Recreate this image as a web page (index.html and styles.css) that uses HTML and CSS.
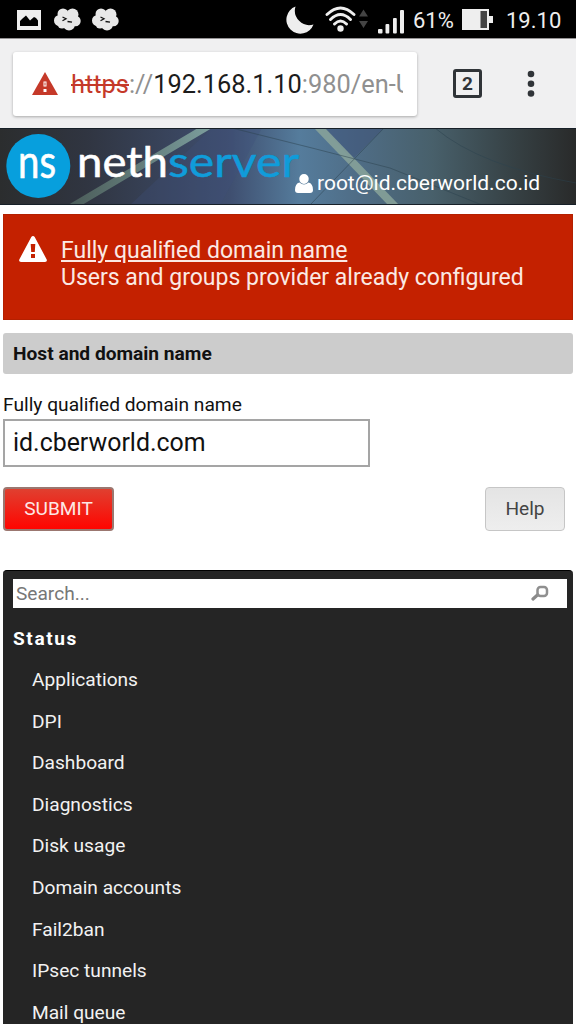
FILE: index.html
```html
<!DOCTYPE html>
<html lang="en">
<head>
  <meta charset="UTF-8">
  <title>Host and domain name</title>
  <link rel="stylesheet" href="styles.css">
</head>
<body>

  <div class="statusbar">
    <svg class="icon-picture" width="24" height="20" viewBox="0 0 24 20">
      <path fill="#eee" fill-rule="evenodd" d="M0 0h24v20H0zM3 16h18V10.500l-2-2.500-2-1-4 3.500-4-5-3.500 3-2.500 2.500z"/>
    </svg>
    <svg class="icon-cloud" width="27" height="23" viewBox="0 0 27 23">
      <g fill="#e8e8e8"><circle cx="9" cy="6" r="5.500"/><circle cx="18.500" cy="6.500" r="6"/><circle cx="5.500" cy="12.500" r="5.500"/><circle cx="21.500" cy="13" r="5.200"/><circle cx="8" cy="16" r="4.500"/><circle cx="15" cy="16.500" r="6"/><circle cx="13" cy="11" r="6"/></g>
      <path d="M8.500 9l3.500 1.700-3.500 2M13.500 13.500l4.500.7" fill="none" stroke="#111" stroke-width="1.300"/>
    </svg>
    <svg class="icon-cloud" width="27" height="23" viewBox="0 0 27 23">
      <g fill="#e8e8e8"><circle cx="9" cy="6" r="5.500"/><circle cx="18.500" cy="6.500" r="6"/><circle cx="5.500" cy="12.500" r="5.500"/><circle cx="21.500" cy="13" r="5.200"/><circle cx="8" cy="16" r="4.500"/><circle cx="15" cy="16.500" r="6"/><circle cx="13" cy="11" r="6"/></g>
      <path d="M8.500 9l3.500 1.700-3.500 2M13.500 13.500l4.500.7" fill="none" stroke="#111" stroke-width="1.300"/>
    </svg>
    <svg class="icon-moon" width="28" height="28" viewBox="0 0 28 28">
      <path fill="#eee" d="M9.500 0.500A14 14 0 1 0 27.500 18.500A14.500 14.500 0 0 1 9.500 0.500z"/>
    </svg>
    <svg class="icon-wifi" width="45" height="27" viewBox="0 0 45 27">
      <g fill="none" stroke="#eee" stroke-width="2.900" stroke-linecap="round">
        <path d="M2 8.500Q15.500-4.500 29 8.500M5.500 13.500Q15.500 3.500 25.500 13.500M9.500 18Q15.500 12 21.500 18"/>
      </g>
      <circle cx="15.500" cy="22.500" r="3.200" fill="#eee"/>
      <path fill="#444" d="M34 10.500l4.500-7 4.500 7zM34 15h9l-4.500 7z"/>
    </svg>
    <svg class="icon-signal" width="27" height="24" viewBox="0 0 27 24">
      <g fill="#eee"><rect x="0" y="19" width="4.500" height="4.500" rx="1"/><rect x="7.500" y="14" width="3.800" height="9.500" rx="1"/><rect x="15" y="8" width="3.800" height="15.500" rx="1"/><rect x="22" y="0" width="4" height="23.500" rx="1"/></g>
    </svg>
    <span class="battery-text">61%</span>
    <svg class="icon-battery" width="31" height="21" viewBox="0 0 31 21">
      <path fill="#eee" d="M0 0h27v7h4v7h-4v7H0z"/>
      <rect x="18.500" y="2" width="6.500" height="17" fill="#444"/>
    </svg>
    <span class="clock">19.10</span>
  </div>

  <div class="toolbar">
    <div class="address">
      <svg width="26" height="23" viewBox="0 0 26 23">
        <path fill="#c53929" d="M13 0l13 23H0z"/>
        <path fill="#fff" d="M11.500 9.500h3v5h-3zM11.500 17h3v3h-3z"/>
        <path fill="#c53929" d="M12.500 10.500h1v3h-1z"/>
      </svg>
      <div class="url"><span class="scheme">https</span>://<span class="host">192.168.1.10</span>:980/en-US</div>
    </div>
    <div class="tabs">2</div>
    <svg class="dots" width="8" height="28" viewBox="0 0 8 28">
      <g fill="#303438"><circle cx="4" cy="4" r="3.300"/><circle cx="4" cy="13.800" r="3.300"/><circle cx="4" cy="23.500" r="3.300"/></g>
    </svg>
  </div>

  <div class="header">
    <svg class="banner" width="576" height="77" viewBox="0 0 576 77">
      <defs>
        <linearGradient id="sky" x1="0" x2="1" y1="0" y2="0">
          <stop offset="0" stop-color="#2b2d2e"/>
          <stop offset=".15" stop-color="#303541"/>
          <stop offset=".4" stop-color="#3f4f70"/>
          <stop offset=".52" stop-color="#557c9c"/>
          <stop offset=".62" stop-color="#4f6d86"/>
          <stop offset=".75" stop-color="#48606b"/>
          <stop offset=".9" stop-color="#353f42"/>
          <stop offset="1" stop-color="#292a2a"/>
        </linearGradient>
        <linearGradient id="beam" x1="0" x2="1" y1="0" y2="0">
          <stop offset="0" stop-color="#4a5b58"/>
          <stop offset="1" stop-color="#7c9e9d"/>
        </linearGradient>
      </defs>
      <rect width="576" height="77" fill="url(#sky)"/>
      <path fill="#3e4f7c" opacity=".3" d="M212 0h50L220 77H130z"/>
      <path fill="#3c4f78" opacity=".5" d="M324 0h60L352 32z"/>
      <path fill="url(#beam)" d="M198 0h14L82 77H68z"/>
      <path fill="#8aa59a" opacity=".85" d="M314 0h11L399 77H388z"/>
      <path fill="none" stroke="#2c414e" opacity=".5" d="M232 0l80 20 78 20 92 37M384 0L310 77M435 0q45 38 141 55"/>
      <path fill="none" stroke="#172028" d="M0 .5h576M0 76.500h576"/>
      <circle cx="38.300" cy="38" r="32" fill="#079fdd"/>
      <text class="mark" x="18" y="50" textLength="38" lengthAdjust="spacingAndGlyphs">ns</text>
      <text class="wordmark" x="77" y="49" textLength="91" lengthAdjust="spacingAndGlyphs">neth</text>
      <text class="wordmark blue" x="168" y="49" textLength="131" lengthAdjust="spacingAndGlyphs">server</text>
    </svg>
    <div class="user">
      <svg width="18" height="19" viewBox="0 0 18 19">
        <path fill="#fff" d="M9 0a4.700 4.700 0 0 1 4.700 5A4.700 5 0 1 1 4.300 5 4.700 4.700 0 0 1 9 0zM4.500 8.500q4.500 4 9 0Q18 9.500 18 16q0 3-3 3H3q-3 0-3-3 0-6.500 4.500-7.500z"/>
      </svg>
      <span>root@id.cberworld.co.id</span>
    </div>
  </div>

  <div class="alert">
    <svg width="28" height="26" viewBox="0 0 28 26">
      <path fill="#fff" fill-rule="evenodd" d="M14 0q1 0 1.700 1L27.700 23.500Q28.500 26 26 26H2Q-.500 26 .3 23.500L12.300 1Q13 0 14 0zM11.700 8l.5 8h3.600l.5-8zM12 18v4h4v-4z"/>
    </svg>
    <div class="alert-text">
      <a href="#">Fully qualified domain name</a><br>
      Users and groups provider already configured
    </div>
  </div>

  <h2>Host and domain name</h2>

  <form>
    <label for="fqdn">Fully qualified domain name</label>
    <input type="text" id="fqdn" value="id.cberworld.com">
    <div class="buttons">
      <button class="submit" type="submit">SUBMIT</button>
      <button class="help" type="button">Help</button>
    </div>
  </form>

  <div class="menu">
    <div class="search">
      <input type="text" placeholder="Search...">
      <svg width="18" height="17" viewBox="0 0 18 17">
        <path d="M7 9.500L2 14" stroke="#8a8a8a" stroke-width="3.200" stroke-linecap="round"/>
        <rect x="6.500" y="2" width="9.500" height="9" rx="3" fill="#fff" stroke="#8f8f8f" stroke-width="2.500"/>
      </svg>
    </div>
    <h3>Status</h3>
    <ul>
      <li>Applications</li>
      <li>DPI</li>
      <li>Dashboard</li>
      <li>Diagnostics</li>
      <li>Disk usage</li>
      <li>Domain accounts</li>
      <li>Fail2ban</li>
      <li>IPsec tunnels</li>
      <li>Mail queue</li>
    </ul>
  </div>

</body>
</html>
```
FILE: styles.css
```css
* { box-sizing: border-box; }
html {
  height: 1024px;
  overflow: hidden;
}
body {
  margin: 0;
  height: 1024px;
  overflow: hidden;
  background-color: #fff;
  font-family: Roboto, "Liberation Sans", sans-serif;
  color: #111;
}
svg {
  display: block;
  flex: none;
}

/* phone status bar */
.statusbar {
  display: flex;
  align-items: center;
  height: 38px;
  padding: 1px 13px 0 17px;
  background-color: #000;
  color: #eee;
  font-size: 22px;
  white-space: nowrap;
}
.icon-cloud { margin-left: 13px; }
.icon-cloud + .icon-cloud { margin-left: 11px; }
.icon-moon { margin-left: 167px; }
.icon-wifi { margin-left: 11px; }
.icon-signal {
  margin-left: 8px;
  margin-top: 4px;
}
.battery-text {
  width: 48px;
  margin-left: 8px;
  margin-top: 2px;
}
.icon-battery { margin-left: 1px; }
.clock {
  margin-left: 13px;
  margin-top: 2px;
}

/* browser toolbar */
.toolbar {
  display: flex;
  align-items: center;
  height: 90px;
  padding-left: 13px;
  border-top: 1px solid #949294;
  background-color: #f0f0f1;
}
.address {
  display: flex;
  align-items: center;
  width: 404px;
  height: 64px;
  padding: 0 14px 0 19px;
  border-radius: 3px;
  background-color: #fff;
  box-shadow: 0 1px 3px rgba(0,0,0,0.3);
}
.url {
  flex: 1;
  margin-left: 13px;
  overflow: hidden;
  white-space: nowrap;
  font-size: 25.4px;
  color: #909090;
}
.scheme {
  color: #c53929;
  text-decoration: line-through;
}
.host { color: #1c1c1c; }
.tabs {
  width: 29px;
  height: 29px;
  margin-left: 36px;
  border: 3px solid #303438;
  border-radius: 3px;
  line-height: 24px;
  text-align: center;
  font-size: 19px;
  font-weight: bold;
  color: #303438;
}
.dots { margin-left: 45px; }

/* page header */
.header {
  display: grid;
  height: 77px;
}
.banner, .user { grid-area: 1 / 1; }
.mark {
  font-family: Lato, sans-serif;
  font-size: 47px;
  fill: #fff;
  stroke: #fff;
  stroke-width: 0.6px;
}
.wordmark {
  font-family: Lato, sans-serif;
  font-size: 43px;
  fill: #fff;
  stroke: #fff;
  stroke-width: 0.5px;
}
.blue {
  fill: #109cda;
  stroke: #109cda;
}
.user {
  display: flex;
  align-items: center;
  align-self: end;
  height: 28px;
  margin: 0 0 8px 295px;
  font-size: 21px;
  color: #fff;
}
.user span { margin-left: 4px; }

.alert {
  display: flex;
  height: 106px;
  margin: 9px 3px 13px;
  padding: 21px 15px;
  border: 1px solid #b42000;
  background-color: #c42100;
  color: #fbe9e4;
}
.alert a {
  color: inherit;
  text-underline-offset: 2px;
}
.alert-text {
  margin-left: 14px;
  padding-top: 1px;
  font-size: 23px;
  line-height: 27px;
  white-space: nowrap;
}

h2 {
  height: 41px;
  margin: 0 3px;
  padding-left: 10px;
  border-radius: 3px;
  background-color: #ccc;
  line-height: 41px;
  font-size: 19.15px;
}

form { padding: 18px 3px 0; }
label {
  display: block;
  height: 27px;
  line-height: 26px;
  font-size: 19.2px;
}
#fqdn {
  display: block;
  width: 367px;
  height: 48px;
  padding: 0 8px 2px;
  border: 2px solid #a5a5a5;
  font-family: inherit;
  font-size: 24.9px;
  color: #111;
}
.buttons {
  display: flex;
  justify-content: space-between;
  margin-top: 20px;
  padding-right: 8px;
}
button {
  height: 44px;
  padding: 0 0 2px;
  border-radius: 4px;
  font-family: inherit;
  font-size: 19.1px;
}
.submit {
  width: 111px;
  border: 2px solid #9b7770;
  background: linear-gradient(#e04030, #ff0500);
  color: #fde8e6;
}
.help {
  width: 80px;
  border: 1px solid #c6c6c6;
  background: linear-gradient(#e4e4e4, #eee);
  color: #444;
}

/* side menu, stacked below the form on small screens */
.menu {
  height: 454px;
  margin: 39px 3px 0;
  padding: 9px 6px 0 10px;
  border-radius: 4px 4px 0 0;
  border-top: 1px solid #000;
  background-color: #252525;
  color: #f2f2f2;
}
.search {
  display: flex;
  align-items: center;
  height: 29px;
  margin-top: -1px;
  padding-right: 18px;
  background-color: #fff;
}
.search input {
  flex: 1;
  padding: 0 3px;
  border: none;
  background: none;
  font-family: inherit;
  font-size: 19.1px;
}
.search input::placeholder { color: #777; }
h3 {
  margin: 15px 0 0;
  line-height: 31px;
  font-size: 19.1px;
  letter-spacing: 1.6px;
  color: #fff;
}
ul {
  margin: 5px 0 0;
  padding: 0 0 0 19px;
  list-style: none;
}
li {
  height: 41.6px;
  line-height: 41.6px;
  font-size: 19.15px;
}
```
